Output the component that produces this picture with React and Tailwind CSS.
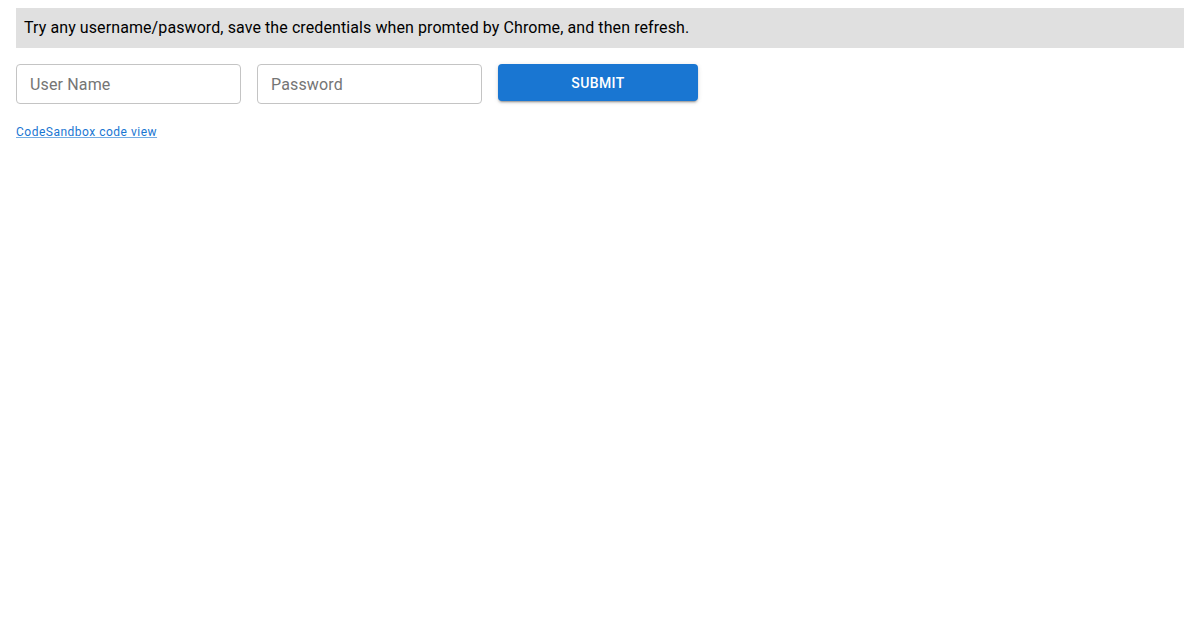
export default function App() {
  return (
    <div className="min-h-screen bg-white px-4 pt-2 font-['Roboto',sans-serif]">
      <div className="flex h-10 items-center bg-[#e0e0e0] px-2 text-base tracking-[0.09px] text-black">
        Try any username/pasword, save the credentials when promted by Chrome, and then refresh.
      </div>
      <form className="mt-4 flex items-start gap-4" onSubmit={e => e.preventDefault()}>
        <input
          type="text"
          placeholder="User Name"
          className="h-10 w-[225px] rounded border border-[#c4c4c4] px-[13px] text-base tracking-[0.15px] text-black placeholder:text-[#757575] outline-none"
        />
        <input
          type="password"
          placeholder="Password"
          className="h-10 w-[225px] rounded border border-[#c4c4c4] px-[13px] text-base tracking-[0.15px] text-black placeholder:text-[#757575] outline-none"
        />
        <button
          type="submit"
          className="h-[37px] w-[200px] rounded bg-[#1976d2] pt-px text-[14px] font-medium uppercase tracking-[0.4px] text-white shadow-[0_3px_1px_-2px_rgba(0,0,0,0.2),0_2px_2px_0_rgba(0,0,0,0.14),0_1px_5px_0_rgba(0,0,0,0.12)]"
        >
          Submit
        </button>
      </form>
      <div className="mt-[18px] leading-[17px]">
        <a href="#" className="text-xs tracking-[0.5px] text-[#1976d2] underline decoration-[#1976d2]/60">
          CodeSandbox code view
        </a>
      </div>
    </div>
  );
}
